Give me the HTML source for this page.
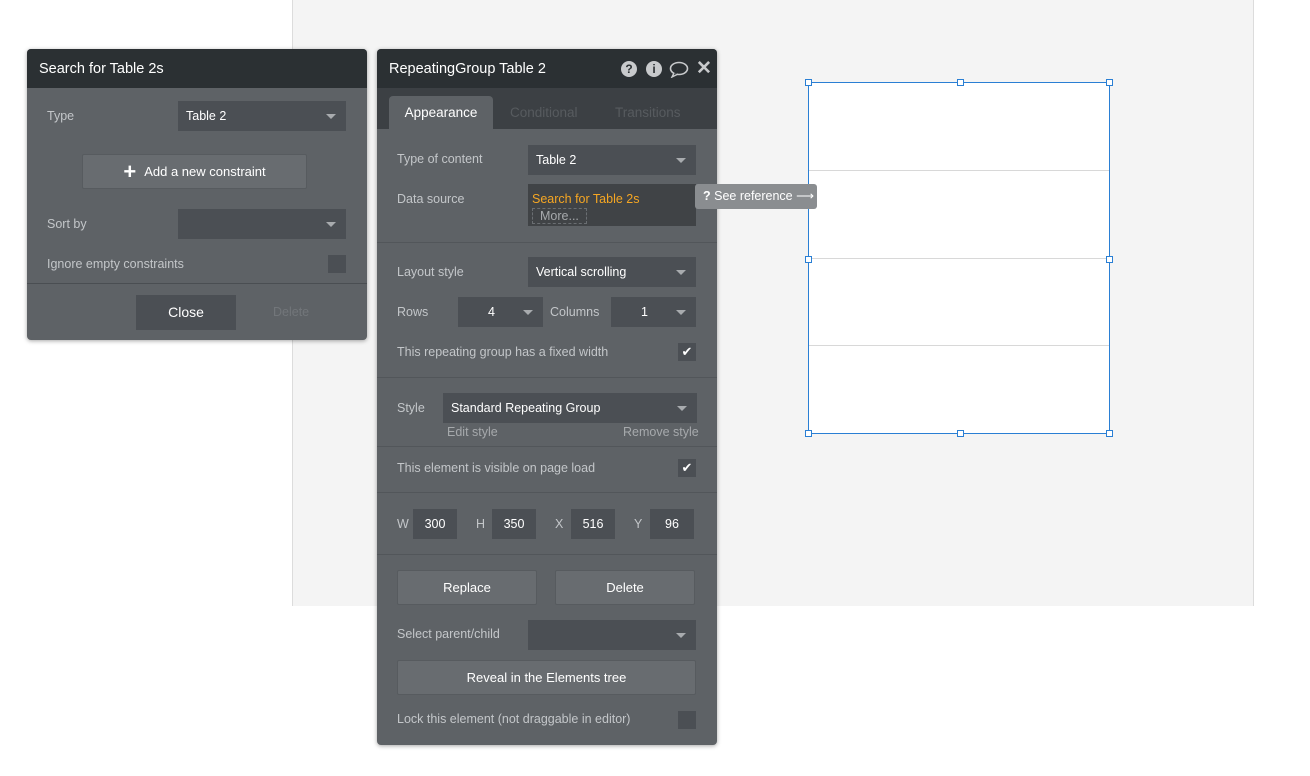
<!DOCTYPE html>
<html><head><style>
*{box-sizing:border-box;margin:0;padding:0}
body{width:1310px;height:776px;background:#fff;position:relative;overflow:hidden;font-family:"Liberation Sans",sans-serif;font-size:12.5px}
.a{position:absolute}
.panel{position:absolute;background:#5e6266;border-radius:4px;box-shadow:0 1px 4px rgba(0,0,0,.35);overflow:hidden}
.hd{position:absolute;left:0;top:0;right:0;height:39px;background:#2b3033;color:#fff;font-size:14.5px;padding:12px 12px}
.lbl{position:absolute;color:#c3c6c9;font-size:12.5px}
.fld{position:absolute;background:#4b4f54;color:#fff;font-size:12.5px;padding-left:8px;line-height:30px}
.dd::after{content:"";position:absolute;right:10px;top:13px;border-left:5px solid transparent;border-right:5px solid transparent;border-top:5px solid #a8abae}
.hr{position:absolute;left:0;right:0;height:1px;background:#52565a}
.cb{position:absolute;width:18px;height:18px;background:#4b4f54;color:#fff;font-size:13px;text-align:center;line-height:18px}
.btn{position:absolute;background:#686c70;border:1px solid #575b5f;color:#fff;font-size:13px;text-align:center;border-radius:2px}
.h{position:absolute;width:7px;height:7px;background:#fff;border:1px solid #2a7fd4}
</style></head><body>
<div class="a" style="left:292px;top:0;width:962px;height:606px;background:#f4f4f4;border-left:1px solid #dcdcdc;border-right:1px solid #dcdcdc"></div>

<!-- RG box -->
<div class="a" style="left:808px;top:82px;width:302px;height:352px;background:#fff;border:1px solid #2a7fd4"></div>
<div class="a" style="left:809px;top:170px;width:300px;height:1px;background:#d8d8d8"></div>
<div class="a" style="left:809px;top:258px;width:300px;height:1px;background:#d8d8d8"></div>
<div class="a" style="left:809px;top:345px;width:300px;height:1px;background:#d8d8d8"></div>
<div class="h" style="left:805px;top:79px"></div><div class="h" style="left:957px;top:79px"></div><div class="h" style="left:1106px;top:79px"></div>
<div class="h" style="left:805px;top:256px"></div><div class="h" style="left:1106px;top:256px"></div>
<div class="h" style="left:805px;top:430px"></div><div class="h" style="left:957px;top:430px"></div><div class="h" style="left:1106px;top:430px"></div>

<!-- Search panel -->
<div class="panel" style="left:27px;top:49px;width:340px;height:291px">
<div class="hd">Search for Table 2s</div>
<div class="lbl" style="left:20px;top:60px">Type</div>
<div class="fld dd" style="left:151px;top:52px;width:168px;height:30px">Table 2</div>
<div class="btn" style="left:55px;top:105px;width:225px;height:35px;line-height:33px"><span style="font-size:22px;font-weight:bold;vertical-align:-3px;margin-right:8px">+</span>Add a new constraint</div>
<div class="lbl" style="left:20px;top:168px">Sort by</div>
<div class="fld dd" style="left:151px;top:160px;width:168px;height:30px"></div>
<div class="lbl" style="left:20px;top:208px">Ignore empty constraints</div>
<div class="cb" style="left:301px;top:206px"></div>
<div class="hr" style="top:234px;background:#4a4e52"></div>
<div class="a" style="left:109px;top:246px;width:100px;height:35px;background:#4b4f54;color:#fff;font-size:14px;text-align:center;line-height:35px">Close</div>
<div class="lbl" style="left:246px;top:256px;color:#72767a">Delete</div>
</div>

<!-- RG panel -->
<div class="panel" style="left:377px;top:49px;width:340px;height:696px">
<div class="hd">RepeatingGroup Table 2</div>
<div class="a" style="left:244px;top:12px;width:16px;height:16px;border-radius:50%;background:#c8cacc;color:#2b3033;font-weight:bold;font-size:12px;text-align:center;line-height:16px">?</div>
<div class="a" style="left:269px;top:12px;width:16px;height:16px;border-radius:50%;background:#c8cacc;color:#2b3033;font-weight:bold;font-size:12px;text-align:center;line-height:16px">i</div>
<svg class="a" style="left:292px;top:12px" width="20" height="17" viewBox="0 0 20 17"><ellipse cx="10" cy="7.5" rx="8.5" ry="6" fill="none" stroke="#c8cacc" stroke-width="1.6"/><path d="M5 12 L3 16 L9 13" fill="#2b3033" stroke="#c8cacc" stroke-width="1.4"/></svg>
<div class="a" style="left:319px;top:8px;color:#c8cacc;font-size:19px;font-weight:bold">✕</div>
<div class="a" style="left:0;top:39px;width:340px;height:41px;background:#3c4044"></div>
<div class="a" style="left:12px;top:47px;width:104px;height:34px;background:#5e6266;border-radius:4px 4px 0 0;color:#fff;font-size:13.5px;text-align:center;line-height:34px">Appearance</div>
<div class="a" style="left:133px;top:56px;color:#575b5f;font-size:13.5px">Conditional</div>
<div class="a" style="left:238px;top:56px;color:#575b5f;font-size:13.5px">Transitions</div>

<div class="lbl" style="left:20px;top:103px">Type of content</div>
<div class="fld dd" style="left:151px;top:96px;width:168px;height:30px">Table 2</div>
<div class="lbl" style="left:20px;top:143px">Data source</div>
<div class="a" style="left:151px;top:135px;width:168px;height:42px;background:#404346"></div>
<div class="a" style="left:155px;top:143px;color:#f5a623;font-size:12.5px">Search for Table 2s</div>
<div class="a" style="left:155px;top:159px;width:55px;height:16px;border:1px dashed #6a6e72;color:#a6a9ac;font-size:12.5px;padding-left:7px;line-height:14px">More...</div>
<div class="hr" style="top:193px"></div>
<div class="lbl" style="left:20px;top:216px">Layout style</div>
<div class="fld dd" style="left:151px;top:208px;width:168px;height:30px">Vertical scrolling</div>
<div class="lbl" style="left:20px;top:256px">Rows</div>
<div class="fld dd" style="left:81px;top:248px;width:85px;height:30px;padding-left:30px">4</div>
<div class="lbl" style="left:173px;top:256px">Columns</div>
<div class="fld dd" style="left:234px;top:248px;width:85px;height:30px;padding-left:30px">1</div>
<div class="lbl" style="left:20px;top:296px">This repeating group has a fixed width</div>
<div class="cb" style="left:301px;top:294px">✔</div>
<div class="hr" style="top:328px"></div>
<div class="lbl" style="left:20px;top:352px">Style</div>
<div class="fld dd" style="left:66px;top:344px;width:254px;height:30px">Standard Repeating Group</div>
<div class="lbl" style="left:70px;top:376px;color:#a6a9ac">Edit style</div>
<div class="lbl" style="left:246px;top:376px;color:#a6a9ac">Remove style</div>
<div class="hr" style="top:397px"></div>
<div class="lbl" style="left:20px;top:412px">This element is visible on page load</div>
<div class="cb" style="left:301px;top:410px">✔</div>
<div class="hr" style="top:443px"></div>
<div class="lbl" style="left:20px;top:468px">W</div><div class="fld" style="left:36px;top:460px;width:44px;height:30px;text-align:center;padding:0">300</div>
<div class="lbl" style="left:99px;top:468px">H</div><div class="fld" style="left:115px;top:460px;width:44px;height:30px;text-align:center;padding:0">350</div>
<div class="lbl" style="left:178px;top:468px">X</div><div class="fld" style="left:194px;top:460px;width:44px;height:30px;text-align:center;padding:0">516</div>
<div class="lbl" style="left:257px;top:468px">Y</div><div class="fld" style="left:273px;top:460px;width:44px;height:30px;text-align:center;padding:0">96</div>
<div class="hr" style="top:505px"></div>
<div class="btn" style="left:20px;top:521px;width:140px;height:35px;line-height:33px">Replace</div>
<div class="btn" style="left:178px;top:521px;width:140px;height:35px;line-height:33px">Delete</div>
<div class="lbl" style="left:20px;top:578px">Select parent/child</div>
<div class="fld dd" style="left:151px;top:571px;width:168px;height:30px"></div>
<div class="btn" style="left:20px;top:611px;width:299px;height:35px;line-height:33px">Reveal in the Elements tree</div>
<div class="lbl" style="left:20px;top:663px">Lock this element (not draggable in editor)</div>
<div class="cb" style="left:301px;top:662px"></div>
</div>

<div class="a" style="left:695px;top:184px;width:122px;height:25px;background:#8a8d90;border-radius:3px;color:#fff;font-size:12.5px;line-height:24px;padding-left:8px"><b>?</b> See reference ⟶</div>
</body></html>
